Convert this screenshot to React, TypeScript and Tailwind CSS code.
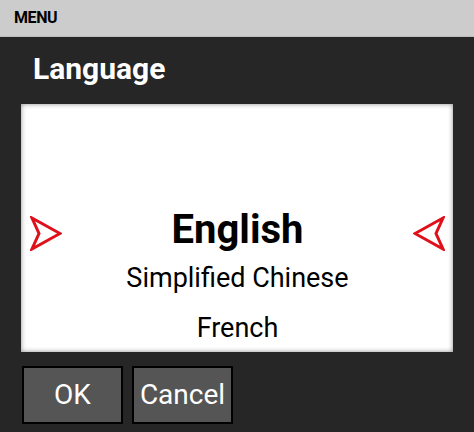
import { ReactNode } from "react";

function Arrow({ flip }: { flip?: boolean }) {
    return (
        <svg width="32" height="35" viewBox="0 0 32 35" className={flip ? "-scale-x-100" : ""}>
            <path d="M2 2 L30 17.5 L2 33 L9 17.5 Z" fill="none" stroke="#e0101a" strokeWidth="3" strokeLinejoin="miter" />
        </svg>
    );
}

function Btn({ children }: { children: ReactNode }) {
    return (
        <button className="w-[101px] h-[58px] bg-[#555555] border-2 border-black text-white text-[28px] leading-none">
            {children}
        </button>
    );
}

export default function App() {
    return (
        <div className="w-[474px] h-[432px] flex flex-col bg-[#262626] font-['Roboto',sans-serif] overflow-hidden">
            <div className="h-[37px] bg-[#cccccc] flex items-center px-[14px] border-b border-[#bdbdbd]">
                <span className="text-[16px] font-bold text-black tracking-tight">MENU</span>
            </div>
            <div className="pl-[33px] pt-[12px] h-[67px]">
                <h1 className="text-[30px] font-bold text-white leading-[40px]">Language</h1>
            </div>
            <div className="mx-[21px] h-[248px] bg-white shadow-[inset_0_0_5px_rgba(0,0,0,0.45)] flex items-center justify-between pl-[9px] pr-[8px]">
                <div className="mt-[10px]"><Arrow /></div>
                <div className="flex flex-col items-center text-black pt-[93px]">
                    <span className="text-[40px] font-bold leading-[46px]">English</span>
                    <span className="text-[27px] leading-[30px] mt-[10px]">Simplified Chinese</span>
                    <span className="text-[27px] leading-[30px] mt-[20px]">French</span>
                </div>
                <div className="mt-[10px]"><Arrow flip /></div>
            </div>
            <div className="flex gap-[9px] px-[22px] pt-[14px]">
                <Btn>OK</Btn>
                <Btn>Cancel</Btn>
            </div>
        </div>
    );
}
